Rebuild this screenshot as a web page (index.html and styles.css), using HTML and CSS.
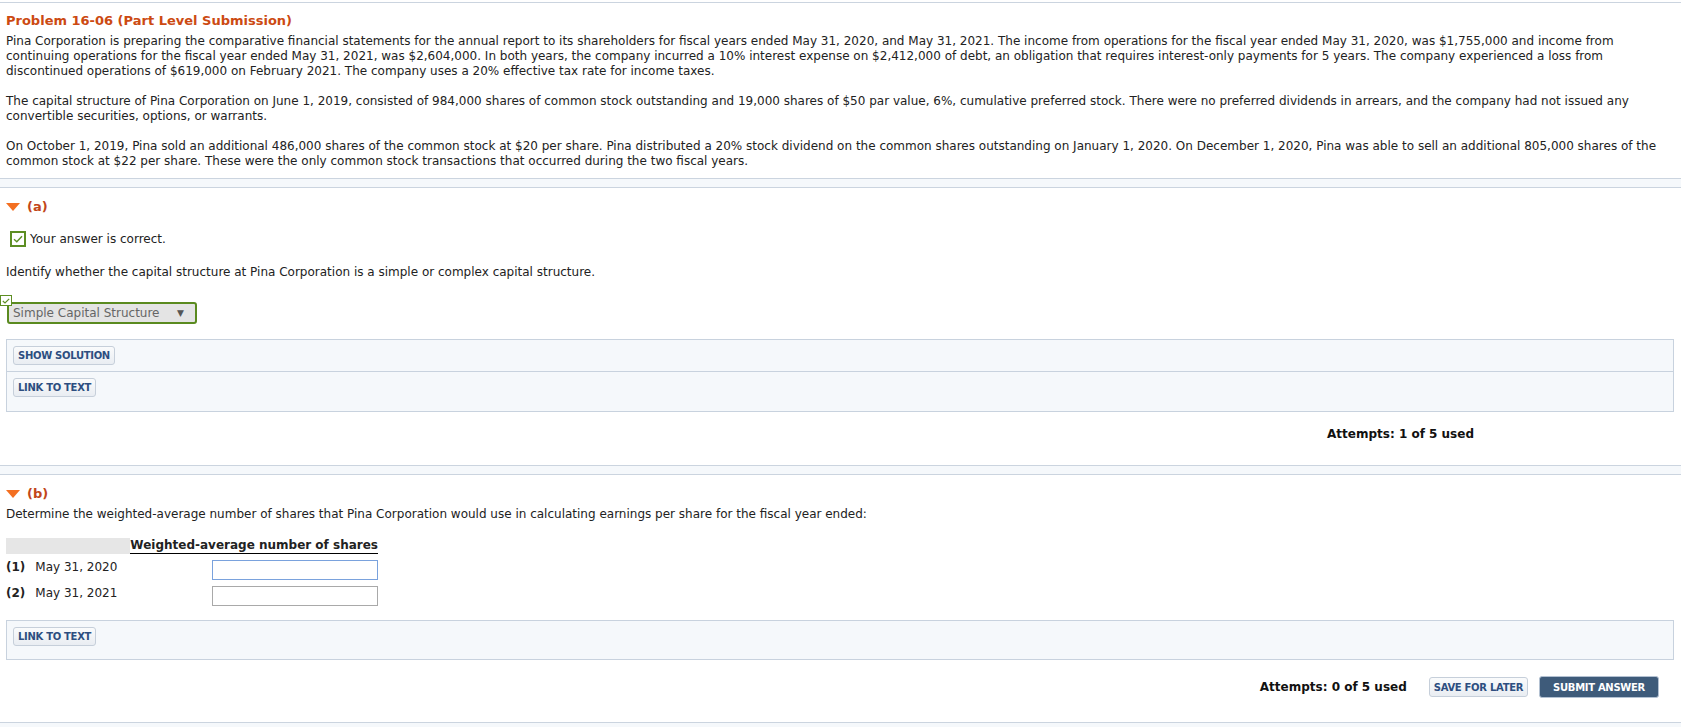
FILE: index.html
```html
<!DOCTYPE html>
<html lang="en">

<head>
    <meta charset="UTF-8" />
    <title>Problem 16-06</title>
    <link rel="stylesheet" href="styles.css">
</head>

<body>
    <div class="question">
        <h2 class="question-title">Problem 16-06 (Part Level Submission)</h2>
        <p>Pina Corporation is preparing the comparative financial statements for the annual report to its shareholders for fiscal years ended May 31, 2020, and May 31, 2021. The income from operations for the fiscal year ended May 31, 2020, was $1,755,000 and income from continuing operations for the fiscal year ended May 31, 2021, was $2,604,000. In both years, the company incurred a 10% interest expense on $2,412,000 of debt, an obligation that requires interest-only payments for 5 years. The company experienced a loss from discontinued operations of $619,000 on February 2021. The company uses a 20% effective tax rate for income taxes.</p>
        <p>The capital structure of Pina Corporation on June 1, 2019, consisted of 984,000 shares of common stock outstanding and 19,000 shares of $50 par value, 6%, cumulative preferred stock. There were no preferred dividends in arrears, and the company had not issued any convertible securities, options, or warrants.</p>
        <p>On October 1, 2019, Pina sold an additional 486,000 shares of the common stock at $20 per share. Pina distributed a 20% stock dividend on the common shares outstanding on January 1, 2020. On December 1, 2020, Pina was able to sell an additional 805,000 shares of the common stock at $22 per share. These were the only common stock transactions that occurred during the two fiscal years.</p>
    </div>

    <div class="divider"></div>

    <!-- part (a) -->
    <div class="part part-a">
        <div class="part-head"><span class="caret"></span>(a)</div>

        <div class="correct">
            <span class="check-box">
                <svg width="10" height="8" viewBox="0 0 10 8"><path d="M1 4.2 L3.8 6.8 L9 1.2" fill="none" stroke="#5d8e23" stroke-width="1.4" /></svg>
            </span>
            Your answer is correct.
        </div>

        <p class="prompt">Identify whether the capital structure at Pina Corporation is a simple or complex capital structure.</p>

        <div class="answer-select">
            <span class="mini-check">
                <svg width="8" height="6" viewBox="0 0 8 6"><path d="M0.8 3 L3 5 L7.2 0.8" fill="none" stroke="#5d8e23" stroke-width="1.2" /></svg>
            </span>
            <div class="select-box">
                <span>Simple Capital Structure</span>
                <span class="select-arrow">&#9660;</span>
            </div>
        </div>

        <div class="tools-panel">
            <div class="tools-row"><button class="btn-light">Show Solution</button></div>
            <div class="tools-row tools-last"><button class="btn-light">Link to Text</button></div>
        </div>

        <div class="attempts-row attempts-a">
            <span class="attempts">Attempts: 1 of 5 used</span>
        </div>
    </div>

    <div class="divider"></div>

    <!-- part (b) -->
    <div class="part part-b">
        <div class="part-head"><span class="caret"></span>(b)</div>
        <p class="prompt-b">Determine the weighted-average number of shares that Pina Corporation would use in calculating earnings per share for the fiscal year ended:</p>

        <div class="shares-table">
            <div class="table-head"><span>Weighted-average number of shares</span></div>
            <div class="table-row">
                <div class="row-label"><b>(1)</b>May 31, 2020</div>
                <input type="text" class="num-input focused" />
            </div>
            <div class="table-row">
                <div class="row-label"><b>(2)</b>May 31, 2021</div>
                <input type="text" class="num-input" />
            </div>
        </div>

        <div class="tools-panel panel-b">
            <div class="tools-row tools-last"><button class="btn-light">Link to Text</button></div>
        </div>

        <div class="attempts-row attempts-b">
            <span class="attempts">Attempts: 0 of 5 used</span>
            <button class="btn-light btn-save">Save for Later</button>
            <button class="btn-submit">Submit Answer</button>
        </div>
    </div>

    <div class="bottom-line"></div>
</body>

</html>
```

FILE: styles.css
```css
body {
    margin: 0;
    font-family: "DejaVu Sans", Verdana, sans-serif;
    font-size: 12px;
    color: #222;
    background: #fff;
}

p {
    margin: 0;
    line-height: 15px;
}

.question {
    margin-top: 2px;
    border-top: 1px solid #cbd4df;
    padding: 10px 6px 0 6px;
}

.question-title {
    margin: 0 0 5px;
    font-size: 13px;
    line-height: 16px;
    color: #cc4a12;
}

.question p + p {
    margin-top: 15px;
}

.divider {
    margin-top: 9px;
    height: 8px;
    background-color: #f5f8fb;
    border-top: 1px solid #cbd4df;
    border-bottom: 1px solid #cbd4df;
}

.part {
    padding: 11px 7px 0 6px;
}

.part-head {
    display: flex;
    align-items: center;
    font-size: 13px;
    font-weight: bold;
    line-height: 16px;
    color: #c2461a;
}

.caret {
    width: 0;
    height: 0;
    border-left: 7px solid transparent;
    border-right: 7px solid transparent;
    border-top: 8px solid #f36f21;
    margin-right: 7px;
}

.correct {
    display: flex;
    align-items: center;
    margin: 16px 0 0 4px;
    line-height: 16px;
}

.check-box {
    display: flex;
    align-items: center;
    justify-content: center;
    width: 12px;
    height: 12px;
    border: 2px solid #5d8e23;
    margin-right: 4px;
    background: #fff;
}

.prompt {
    margin-top: 18px;
}

.answer-select {
    position: relative;
    margin-top: 22px;
    padding-left: 1px;
}

.mini-check {
    position: absolute;
    left: -6px;
    top: -7px;
    width: 10px;
    height: 9px;
    border: 1px solid #5d8e23;
    background: #fff;
    display: flex;
    align-items: center;
    justify-content: center;
}

.select-box {
    display: flex;
    justify-content: space-between;
    align-items: center;
    width: 171px;
    height: 18px;
    padding: 0 11px 0 4px;
    border: 2px solid #5a8a1f;
    border-radius: 3px;
    background-color: #e4e4e4;
    color: #666;
    font-size: 12px;
}

.select-arrow {
    font-size: 9px;
    color: #555;
}

.tools-panel {
    margin-top: 15px;
    border: 1px solid #c8d2de;
    background-color: #f5f8fb;
}

.tools-row {
    padding: 6px;
    border-bottom: 1px solid #c8d2de;
}

.tools-row.tools-last {
    border-bottom: none;
    padding-bottom: 14px;
}

.btn-light {
    height: 19px;
    padding: 0 4px;
    font-family: "DejaVu Sans", Verdana, sans-serif;
    font-size: 10px;
    font-weight: bold;
    letter-spacing: -0.3px;
    text-transform: uppercase;
    color: #2d4e80;
    background: linear-gradient(#fafbfc, #e9edf2);
    border: 1px solid #c6cfda;
    border-radius: 3px;
}

.attempts-row {
    display: flex;
    align-items: center;
    justify-content: flex-end;
}

.attempts-a {
    height: 44px;
    padding-right: 200px;
    margin-bottom: 9px;
}

.attempts {
    font-size: 12px;
    font-weight: bold;
    color: #111;
}

.prompt-b {
    margin-top: 5px;
}

.shares-table {
    margin-top: 16px;
    width: 372px;
}

.table-head {
    display: flex;
    justify-content: flex-end;
    background-color: #e6e6e6;
    height: 16px;
    font-weight: bold;
    line-height: 14px;
}

.table-head span {
    border-bottom: 1px solid #000;
    background-color: #fff;
}

.table-row {
    display: flex;
    justify-content: space-between;
    align-items: flex-start;
    margin-top: 6px;
    line-height: 15px;
}

.row-label b {
    margin-right: 10px;
}

.num-input {
    width: 166px;
    height: 20px;
    box-sizing: border-box;
    border: 1px solid #a9a9a9;
    padding: 0;
}

.num-input.focused {
    border-color: #7aa2dd;
}

.panel-b {
    margin-top: 14px;
}

.panel-b .tools-row {
    padding-bottom: 13px;
}

.attempts-b {
    height: 54px;
    margin-bottom: 8px;
    padding-right: 15px;
}

.btn-save {
    margin-left: 22px;
    height: 20px;
}

.btn-submit {
    margin-left: 11px;
    height: 22px;
    padding: 0 13px;
    font-family: "DejaVu Sans", Verdana, sans-serif;
    font-size: 10px;
    font-weight: bold;
    letter-spacing: -0.3px;
    text-transform: uppercase;
    color: #fff;
    background-color: #3e5b7a;
    border: 1px solid #b3c1d2;
    border-radius: 3px;
}

.bottom-line {
    border-top: 1px solid #cbd4df;
    height: 4px;
    background-color: #f5f8fb;
}
```
